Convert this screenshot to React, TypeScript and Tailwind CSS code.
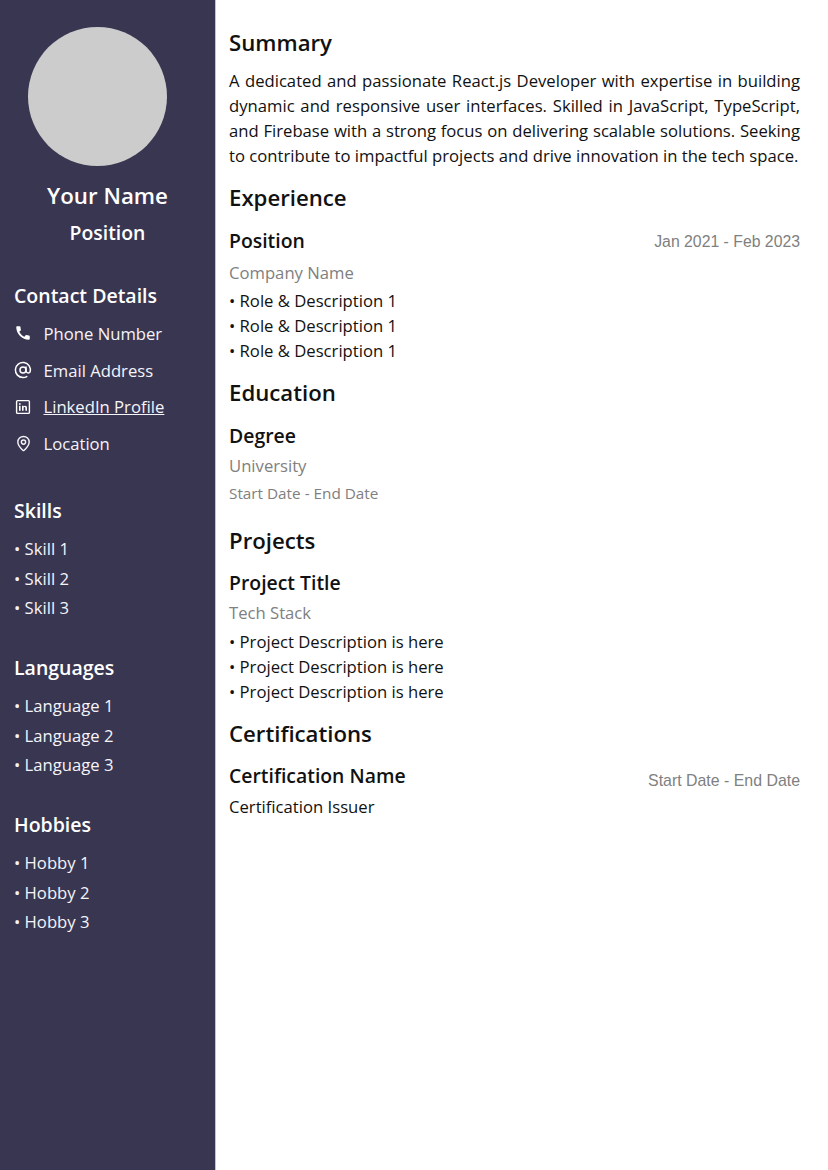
import React from 'react';
import { MapPin } from 'lucide-react';

const sideLists = [
  { title: 'Skills', items: ['Skill 1', 'Skill 2', 'Skill 3'] },
  { title: 'Languages', items: ['Language 1', 'Language 2', 'Language 3'] },
  { title: 'Hobbies', items: ['Hobby 1', 'Hobby 2', 'Hobby 3'] },
];

function PhoneIcon() {
  return (
    <svg width="20" height="20" viewBox="0 0 24 24" fill="white">
      <path d="M20.01 15.38c-1.23 0-2.42-.2-3.53-.56a.977.977 0 0 0-1.01.24l-1.57 1.97c-2.83-1.35-5.48-3.9-6.89-6.83l1.95-1.66c.27-.28.35-.67.24-1.02-.37-1.11-.56-2.3-.56-3.53 0-.54-.45-.99-.99-.99H4.19C3.65 3 3 3.24 3 3.99 3 13.28 10.73 21 20.01 21c.71 0 .99-.63.99-1.18v-3.45c0-.54-.45-.99-.99-.99z" />
    </svg>
  );
}

function AtIcon() {
  return (
    <svg width="18" height="18" viewBox="0 0 24 24" fill="none" stroke="white" strokeWidth="2">
      <circle cx="12" cy="12" r="4" />
      <path d="M16 8v5a3 3 0 0 0 5.5 1.6A10 10 0 1 0 12 22c2 0 3.6-.4 5-1.3" strokeLinecap="round" />
    </svg>
  );
}

function LinkedinBox() {
  return (
    <svg width="16" height="16" viewBox="0 0 16 16" fill="none">
      <rect x="1.6" y="1.6" width="12.8" height="12.8" rx="1" stroke="white" strokeWidth="1.4" />
      <rect x="4" y="6.8" width="1.6" height="5" fill="white" />
      <rect x="4" y="4.2" width="1.6" height="1.6" fill="white" />
      <path d="M7 11.8V6.8h1.5v.7c.4-.6 1-.8 1.6-.8 1.3 0 1.9.8 1.9 2.2v2.9h-1.6V9.2c0-.7-.3-1.1-.8-1.1-.6 0-1 .4-1 1.1v2.6H7z" fill="white" />
    </svg>
  );
}

function Contact({ icon, children }: { icon: React.ReactNode; children: React.ReactNode }) {
  return (
    <div className="flex items-center h-[36.8px] text-[16.67px] text-[#f5f4f8]">
      <span className="w-[18px] flex justify-center mr-[11.5px]">{icon}</span>
      {children}
    </div>
  );
}

function Heading({ children }: { children: React.ReactNode }) {
  return <h2 className="text-[22.2px] font-semibold leading-[30px] text-[#111]">{children}</h2>;
}

function Sub({ children }: { children: React.ReactNode }) {
  return <h3 className="text-[19.4px] font-semibold leading-[26px] text-[#111]">{children}</h3>;
}

function Bullets({ items, className }: { items: string[]; className: string }) {
  return (
    <div className={`text-[16.67px] leading-[25px] text-[#111] ${className}`}>
      {items.map((t, i) => (
        <div key={i}>• {t}</div>
      ))}
    </div>
  );
}

export default function App() {
  return (
    <div className="flex w-[828px] h-[1170px] bg-white font-['Open_Sans',sans-serif] overflow-hidden">
      <aside className="w-[216px] shrink-0 bg-[#393652] border-r border-[#c4c2d4] text-white">
        <div className="pt-[27px] pl-[28px]">
          <div className="w-[139px] h-[139px] rounded-full bg-[#cccccc]" />
        </div>
        <div className="mt-[13px] text-center">
          <div className="text-[22.3px] font-semibold leading-[34px] w-[215px]">Your Name</div>
          <div className="text-[19.4px] font-semibold leading-[28px] mt-[6px] w-[215px]">Position</div>
        </div>
        <div className="px-[14px] mt-[36px]">
          <h2 className="text-[19.5px] font-semibold leading-[26px] mb-[6px]">Contact Details</h2>
          <Contact icon={<PhoneIcon />}>Phone Number</Contact>
          <Contact icon={<AtIcon />}>Email Address</Contact>
          <Contact icon={<LinkedinBox />}>
            <span className="underline">LinkedIn Profile</span>
          </Contact>
          <Contact icon={<MapPin size={17} strokeWidth={2} />}>Location</Contact>
          <div className="h-[3.8px]" />
          {sideLists.map((s) => (
            <div key={s.title} className="mt-[32.2px]">
              <h2 className="text-[19.5px] font-semibold leading-[26px] mb-[10px]">{s.title}</h2>
              <div className="text-[16.67px] leading-[29.6px] text-[#f5f4f8]">
                {s.items.map((t) => (
                  <div key={t}>• {t}</div>
                ))}
              </div>
            </div>
          ))}
        </div>
      </aside>
      <main className="flex-1 pl-[13px] pr-[28px] pt-[28px]">
        <Heading>Summary</Heading>
        <p className="mt-[10px] text-[16.67px] leading-[25px] text-[#111] text-justify">
          A dedicated and passionate React.js Developer with expertise in building dynamic and responsive user interfaces. Skilled in JavaScript, TypeScript, and Firebase with a strong focus on delivering scalable solutions. Seeking to contribute to impactful projects and drive innovation in the tech space.
        </p>
        <div className="mt-[15px]"><Heading>Experience</Heading></div>
        <div className="mt-[15px] flex justify-between items-center">
          <Sub>Position</Sub>
          <span className="font-['Liberation_Sans',sans-serif] text-[15.8px] text-[#808080] pt-[1px]">Jan 2021 - Feb 2023</span>
        </div>
        <div className="mt-[6px] text-[16.67px] leading-[26px] text-[#808080]">Company Name</div>
        <Bullets className="mt-[2px]" items={['Role & Description 1', 'Role & Description 1', 'Role & Description 1']} />
        <div className="mt-[15px]"><Heading>Education</Heading></div>
        <div className="mt-[15px]"><Sub>Degree</Sub></div>
        <div className="mt-[4px] text-[16.67px] leading-[26px] text-[#808080]">University</div>
        <div className="mt-[2px] text-[15.3px] leading-[25px] text-[#808080]">Start Date - End Date</div>
        <div className="mt-[20px]"><Heading>Projects</Heading></div>
        <div className="mt-[14px]"><Sub>Project Title</Sub></div>
        <div className="mt-[4px] text-[16.67px] leading-[26px] text-[#808080]">Tech Stack</div>
        <Bullets className="mt-[3px]" items={['Project Description is here', 'Project Description is here', 'Project Description is here']} />
        <div className="mt-[15px]"><Heading>Certifications</Heading></div>
        <div className="mt-[14px] flex justify-between items-start">
          <Sub>Certification Name</Sub>
          <span className="font-['Liberation_Sans',sans-serif] text-[15.9px] leading-[18px] text-[#808080] mt-[9px]">Start Date - End Date</span>
        </div>
        <div className="mt-[4px] text-[16.67px] leading-[26px] text-[#111]">Certification Issuer</div>
      </main>
    </div>
  );
}
